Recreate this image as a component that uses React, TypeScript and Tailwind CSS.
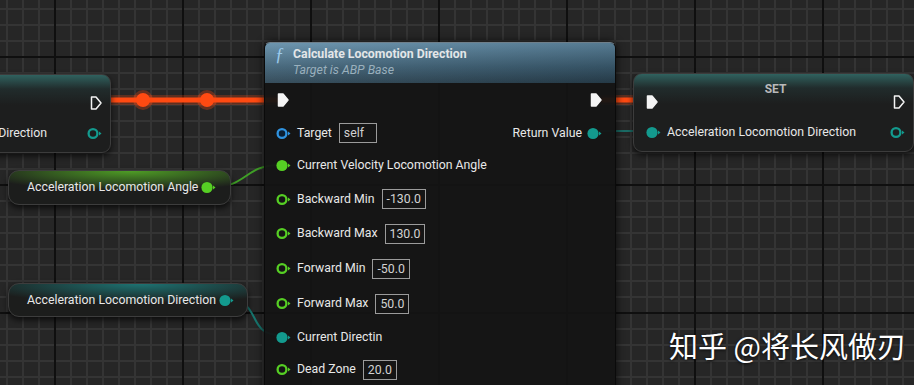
import React from 'react';

type PinKind = 'green' | 'teal' | 'blue';

const pinColor: Record<PinKind, string> = {
  green: '#56cf24',
  teal: '#139a8e',
  blue: '#2f93e0',
};

function DataPin({ kind, filled }: { kind: PinKind; filled?: boolean }) {
  const c = pinColor[kind];
  return (
    <svg width="15" height="13" viewBox="0 0 15 13" className="shrink-0">
      {filled ? (
        <circle cx="6" cy="6.5" r="5.6" fill={c} />
      ) : (
        <circle cx="6" cy="6.5" r="4.4" fill={kind === 'blue' ? '#0b1f33' : 'none'} stroke={c} strokeWidth="2.3" />
      )}
      <polygon points="12,4.5 14.5,6.5 12,8.5" fill={c} />
    </svg>
  );
}

function ExecPin({ filled = true }: { filled?: boolean }) {
  return (
    <svg width="12" height="14" viewBox="0 0 12 14" className="shrink-0">
      <path
        d="M1.5 1 H6 L11 7 L6 13 H1.5 Z"
        fill={filled ? '#f4f4f4' : 'none'}
        stroke="#f4f4f4"
        strokeWidth="1.5"
        strokeLinejoin="round"
      />
    </svg>
  );
}

function ValueBox({ value, wide }: { value: string; wide?: boolean }) {
  return (
    <span
      className={`ml-[7px] h-[20px] whitespace-nowrap border border-[#9b9b9b] px-[4px] text-[12.3px] leading-[18px] text-[#d2d2d2] ${
        wide ? 'min-w-[38px]' : ''
      }`}
    >
      {value}
    </span>
  );
}

function InputRow({
  kind,
  filled,
  label,
  value,
  wide,
  h,
  right,
}: {
  kind: PinKind;
  filled?: boolean;
  label: string;
  value?: string;
  wide?: boolean;
  h: string;
  right?: React.ReactNode;
}) {
  return (
    <div className={`flex items-center justify-between ${h}`}>
      <div className="flex items-center">
        <DataPin kind={kind} filled={filled} />
        <span className="ml-[6px] whitespace-nowrap text-[12.3px] text-[#e8e8e8]">{label}</span>
        {value && <ValueBox value={value} wide={wide} />}
      </div>
      {right}
    </div>
  );
}

function SetNode({ className, showTitle }: { className: string; showTitle?: boolean }) {
  return (
    <div
      className={`absolute flex flex-col rounded-[9px] border border-[#3c3c3c] bg-[#1d1e1e] shadow-[0_3px_6px_rgba(0,0,0,0.7)] bg-[linear-gradient(180deg,rgba(54,120,116,0.75)_0px,rgba(40,70,70,0.35)_14px,rgba(30,32,32,0)_30px)] pl-[12px] pr-[8px] pt-[9px] pb-[12px] ${className}`}
    >
      <div className="h-[12px] text-center text-[12px] font-bold leading-[12px] text-[#b9b9b9]">
        {showTitle ? 'SET' : ''}
      </div>
      <div className="flex h-[14px] items-center justify-between">
        <ExecPin />
        <ExecPin filled={false} />
      </div>
      <div className="mt-[16px] flex h-[14px] items-center justify-between">
        <div className="flex items-center">
          <DataPin kind="teal" filled />
          <span className="ml-[6px] whitespace-nowrap text-[12.3px] text-[#e8e8e8]">
            Acceleration Locomotion Direction
          </span>
        </div>
        <DataPin kind="teal" />
      </div>
    </div>
  );
}

function VarNode({
  label,
  kind,
  className,
  glow,
}: {
  label: string;
  kind: PinKind;
  className: string;
  glow: string;
}) {
  return (
    <div
      className={`absolute flex items-center justify-between gap-[3px] rounded-[11px] border border-[#3d3d3d] bg-[#1c1d1c] pl-[18px] pr-[15px] shadow-[0_3px_6px_rgba(0,0,0,0.7)] ${glow} ${className}`}
    >
      <span className="whitespace-nowrap text-[12.3px] text-[#e8e8e8]">{label}</span>
      <DataPin kind={kind} filled />
    </div>
  );
}

export default function App() {
  return (
    <div className="relative h-[385px] w-[914px] overflow-hidden bg-[#262626] font-[Roboto,'Noto_Sans_CJK_SC',sans-serif] bg-[linear-gradient(to_right,#0f0f0f_2px,transparent_2px),linear-gradient(to_bottom,#0f0f0f_2px,transparent_2px),linear-gradient(to_right,#343434_2px,transparent_2px),linear-gradient(to_bottom,#343434_2px,transparent_2px)] bg-[size:128px_128px,128px_128px,16px_16px,16px_16px] bg-[position:54px_56px,54px_56px,6px_8px,6px_8px]">
      {/* wires */}
      <svg className="absolute inset-0" width="914" height="385">
        <g stroke="#ff4a12" strokeLinecap="round">
          <line x1="97" y1="100" x2="276" y2="100" strokeWidth="10" opacity="0.25" />
          <line x1="97" y1="100" x2="276" y2="100" strokeWidth="5" />
          <line x1="603" y1="100" x2="648" y2="100" strokeWidth="10" opacity="0.25" />
          <line x1="603" y1="100" x2="648" y2="100" strokeWidth="5" />
        </g>
        <circle cx="143" cy="100" r="10" fill="#ff4a12" opacity="0.3" />
        <circle cx="143" cy="100" r="7" fill="#ff4a12" />
        <circle cx="207" cy="100" r="10" fill="#ff4a12" opacity="0.3" />
        <circle cx="207" cy="100" r="7" fill="#ff4a12" />
        <line x1="600" y1="131" x2="652" y2="131" stroke="#1b6c66" strokeWidth="2" />
        <path d="M212 187 C 248 187, 244 165, 280 165" fill="none" stroke="#3f9f26" strokeWidth="2" />
        <path d="M229 300 C 262 300, 246 335, 280 335" fill="none" stroke="#17766f" strokeWidth="2" />
      </svg>

      <SetNode className="left-[-176px] top-[74px] w-[287px]" />
      <SetNode className="left-[633px] top-[73px] w-[281px]" showTitle />

      <VarNode
        label="Acceleration Locomotion Angle"
        kind="green"
        className="left-[8px] top-[170px] h-[35px] w-[223px]"
        glow="bg-[radial-gradient(ellipse_70%_60%_at_55%_0%,rgba(95,200,40,0.75),rgba(28,29,28,0))]"
      />
      <VarNode
        label="Acceleration Locomotion Direction"
        kind="teal"
        className="left-[8px] top-[283px] h-[34px] w-[240px]"
        glow="bg-[radial-gradient(ellipse_70%_60%_at_55%_0%,rgba(30,160,160,0.65),rgba(28,29,28,0))]"
      />

      {/* function node */}
      <div className="absolute left-[264px] top-[42px] h-[360px] w-[352px] overflow-hidden rounded-[6px] border border-[#0a0a0a] border-t-[#6f7f8a] bg-[#141414f2] shadow-[0_0_8px_rgba(0,0,0,0.8)]">
        <div className="flex h-[40px] items-start bg-[linear-gradient(90deg,rgba(255,255,255,0.06),rgba(0,0,0,0.15)),linear-gradient(180deg,#6590ab,#3e6075_60%,#2b4352)] pl-[10px] pt-[3px]">
          <span className="mt-[1px] w-[18px] font-['Liberation_Serif',serif] text-[18px] italic leading-[16px] text-[#9ccbec]">
            ƒ
          </span>
          <div className="flex flex-col">
            <span className="whitespace-nowrap text-[12.3px] font-bold leading-[16px] text-[#e3e6e8]">
              Calculate Locomotion Direction
            </span>
            <span className="text-[12.3px] italic leading-[17px] text-[#9ab0bd]">Target is ABP Base</span>
          </div>
        </div>
        <div className="flex flex-col pl-[11px] pr-[13px]">
          <div className="flex h-[34px] items-center justify-between pl-[1px]">
            <ExecPin />
            <ExecPin />
          </div>
          <InputRow
            kind="blue"
            label="Target"
            value="self"
            wide
            h="h-[32px]"
            right={
              <div className="flex items-center">
                <span className="mr-[5px] whitespace-nowrap text-[12.3px] text-[#e8e8e8]">Return Value</span>
                <DataPin kind="teal" filled />
              </div>
            }
          />
          <InputRow kind="green" filled label="Current Velocity Locomotion Angle" h="h-[33px]" />
          <InputRow kind="green" label="Backward Min" value="-130.0" h="h-[34px]" />
          <InputRow kind="green" label="Backward Max" value="130.0" h="h-[35px]" />
          <InputRow kind="green" label="Forward Min" value="-50.0" h="h-[35px]" />
          <InputRow kind="green" label="Forward Max" value="50.0" h="h-[35px]" />
          <InputRow kind="teal" filled label="Current Directin" h="h-[32px]" />
          <InputRow kind="green" label="Dead Zone" value="20.0" h="h-[33px]" />
        </div>
      </div>

      <div className="absolute left-[669px] top-[328px] font-['Noto_Sans_CJK_SC',sans-serif] text-[29px] leading-[34px] text-white [text-shadow:0_1px_3px_rgba(0,0,0,0.8)]">
        知乎 @将长风做刃
      </div>
    </div>
  );
}
